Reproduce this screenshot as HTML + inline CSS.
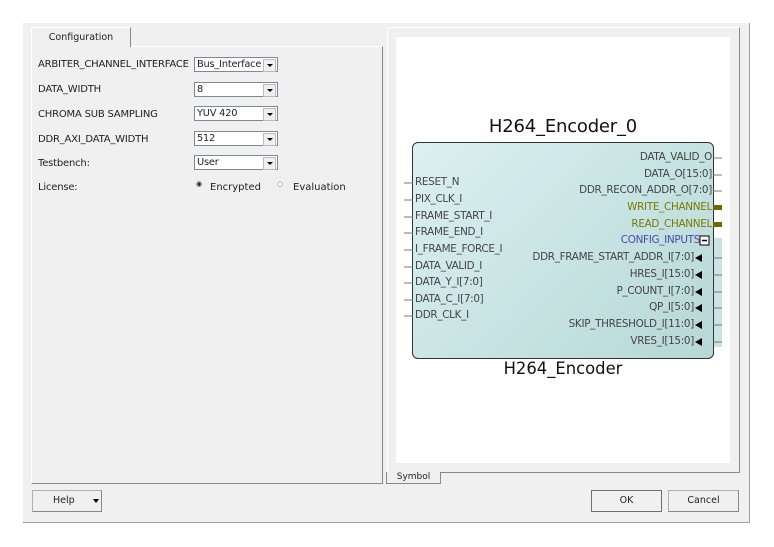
<!DOCTYPE html>
<html><head><meta charset="utf-8"><style>
*{margin:0;padding:0;box-sizing:border-box}
body{width:774px;height:547px;background:#fff;position:relative;overflow:hidden;font-family:"DejaVu Sans","Liberation Sans",sans-serif;font-size:10px;color:#222}
.a{position:absolute}
.dlg{left:23px;top:23px;width:727px;height:500px;background:#f0f0f0;border-right:1px solid #a0a0a0;border-bottom:1px solid #a0a0a0}
.lbl{position:absolute;left:38px;font-size:10px;letter-spacing:-0.2px}
.sel{position:absolute;left:194px;width:84px;height:15px;background:#fff;border:1px solid #828790;font-size:9.8px;padding-left:2px;line-height:13px;letter-spacing:-0.2px}
.sel:after{content:"";position:absolute;right:1px;top:1px;width:11px;height:11px;background:#f0f0f0;border:1px solid #bbb}
.sel i{position:absolute;right:4px;top:6px;border-left:3px solid transparent;border-right:3px solid transparent;border-top:3px solid #000;z-index:2}
.btn{position:absolute;height:22px;background:#f0f0f0;border:1px solid #b0b0b0;border-right-color:#888;border-bottom-color:#888;font-size:9.5px;text-align:center;line-height:20px}
.pl{position:absolute;font-family:"DejaVu Sans",sans-serif;font-size:10.4px;color:#444;letter-spacing:-0.3px;white-space:nowrap}
.r{text-align:right}
</style></head><body>
<div class="a dlg"></div>
<div class="a" style="left:31px;top:46px;width:352px;height:438px;border-top:1px solid #fff;border-right:1px solid #888;border-bottom:1px solid #888;border-left:1px solid #fff"></div>
<div class="a" style="left:31px;top:27px;width:100px;height:20px;background:#f0f0f0;border-left:1px solid #fff;border-top:1px solid #fff;border-right:1px solid #888;font-size:9.5px;text-align:center;line-height:20px">Configuration</div>
<div class="lbl" style="top:59px">ARBITER_CHANNEL_INTERFACE</div>
<div class="sel" style="top:57px">Bus_Interface<i></i></div>
<div class="lbl" style="top:84px">DATA_WIDTH</div>
<div class="sel" style="top:82px">8<i></i></div>
<div class="lbl" style="top:109px">CHROMA SUB SAMPLING</div>
<div class="sel" style="top:106px">YUV 420<i></i></div>
<div class="lbl" style="top:134px">DDR_AXI_DATA_WIDTH</div>
<div class="sel" style="top:131px">512<i></i></div>
<div class="lbl" style="top:158px">Testbench:</div>
<div class="sel" style="top:155px">User<i></i></div>
<div class="lbl" style="top:182px">License:</div>
<div class="a" style="left:196px;top:180px;font-size:7px">◉</div>
<div class="a" style="left:210px;top:182px;font-size:10px">Encrypted</div>
<div class="a" style="left:277px;top:180px;font-size:7px;color:#888">○</div>
<div class="a" style="left:293px;top:182px;font-size:10px">Evaluation</div>
<div class="a" style="left:387px;top:27px;width:353px;height:446px;border-left:1px solid #fff;border-top:1px solid #fff;border-right:1px solid #888;border-bottom:1px solid #888"></div>
<div class="a" style="left:396px;top:37px;width:334px;height:426px;background:#fff"></div>
<div class="a" style="left:386px;top:472px;width:55px;height:12px;border:1px solid #888;border-top:none;background:#f0f0f0;font-size:9px;text-align:center;line-height:11px">Symbol</div>
<div class="a" style="left:396px;top:116px;width:334px;text-align:center;font-family:'DejaVu Sans',sans-serif;font-size:18px;color:#111;letter-spacing:-0.2px">H264_Encoder_0</div>
<div class="a" style="left:713px;top:238px;width:9px;height:109px;background:#cbe3e3"></div>
<div class="a" style="left:412px;top:142px;width:302px;height:217px;border:1.5px solid #333;border-radius:6px;background:linear-gradient(135deg,#dcf0f2,#b6d8d6)"></div>
<div class="a" style="left:396px;top:359px;width:334px;text-align:center;font-family:'DejaVu Sans',sans-serif;font-size:16.4px;color:#111">H264_Encoder</div>
<svg class="a" style="left:0;top:0" width="774" height="547">
<g stroke="#777" stroke-width="1">
<line x1="404" y1="183" x2="413" y2="183"/><line x1="404" y1="200" x2="413" y2="200"/><line x1="404" y1="217" x2="413" y2="217"/><line x1="404" y1="233" x2="413" y2="233"/><line x1="404" y1="250" x2="413" y2="250"/><line x1="404" y1="267" x2="413" y2="267"/><line x1="404" y1="283" x2="413" y2="283"/><line x1="404" y1="300" x2="413" y2="300"/><line x1="404" y1="316" x2="413" y2="316"/>
<line x1="713" y1="158" x2="722" y2="158"/><line x1="713" y1="175" x2="722" y2="175"/><line x1="713" y1="191" x2="722" y2="191"/>
<line x1="713" y1="258" x2="722" y2="258"/><line x1="713" y1="275" x2="722" y2="275"/><line x1="713" y1="292" x2="722" y2="292"/><line x1="713" y1="308" x2="722" y2="308"/><line x1="713" y1="325" x2="722" y2="325"/><line x1="713" y1="342" x2="722" y2="342"/>
</g>
<rect x="713" y="205" width="9" height="5" fill="#6b6b00"/><rect x="713" y="222" width="9" height="5" fill="#6b6b00"/>
<rect x="700" y="236" width="9" height="9" fill="#fff" stroke="#000"/><line x1="702" y1="240.5" x2="707" y2="240.5" stroke="#000" stroke-width="1.5"/>
<g fill="#000"><path d="M695 258l7-4v8z"/><path d="M695 275l7-4v8z"/><path d="M695 292l7-4v8z"/><path d="M695 308l7-4v8z"/><path d="M695 325l7-4v8z"/><path d="M695 342l7-4v8z"/></g>
</svg>
<div class="pl" style="left:415px;top:176px">RESET_N</div>
<div class="pl" style="left:415px;top:193px">PIX_CLK_I</div>
<div class="pl" style="left:415px;top:210px">FRAME_START_I</div>
<div class="pl" style="left:415px;top:226px">FRAME_END_I</div>
<div class="pl" style="left:415px;top:243px">I_FRAME_FORCE_I</div>
<div class="pl" style="left:415px;top:260px">DATA_VALID_I</div>
<div class="pl" style="left:415px;top:276px">DATA_Y_I[7:0]</div>
<div class="pl" style="left:415px;top:293px">DATA_C_I[7:0]</div>
<div class="pl" style="left:415px;top:309px">DDR_CLK_I</div>
<div class="pl r" style="right:62px;top:151px">DATA_VALID_O</div>
<div class="pl r" style="right:62px;top:168px">DATA_O[15:0]</div>
<div class="pl r" style="right:62px;top:184px">DDR_RECON_ADDR_O[7:0]</div>
<div class="pl r" style="right:62px;top:201px;color:#7a7a00">WRITE_CHANNEL</div>
<div class="pl r" style="right:62px;top:218px;color:#7a7a00">READ_CHANNEL</div>
<div class="pl r" style="right:74px;top:234px;color:#4a4aa8">CONFIG_INPUTS</div>
<div class="pl r" style="right:80px;top:251px">DDR_FRAME_START_ADDR_I[7:0]</div>
<div class="pl r" style="right:80px;top:268px">HRES_I[15:0]</div>
<div class="pl r" style="right:80px;top:285px">P_COUNT_I[7:0]</div>
<div class="pl r" style="right:80px;top:301px">QP_I[5:0]</div>
<div class="pl r" style="right:80px;top:318px">SKIP_THRESHOLD_I[11:0]</div>
<div class="pl r" style="right:80px;top:335px">VRES_I[15:0]</div>
<div class="btn" style="left:32px;top:490px;width:70px;text-align:left;padding-left:20px">Help<span style="position:absolute;left:60px;top:8px;border-left:3px solid transparent;border-right:3px solid transparent;border-top:4px solid #000"></span></div>
<div class="btn" style="left:591px;top:490px;width:71px;border-color:#707070">OK</div>
<div class="btn" style="left:668px;top:490px;width:71px">Cancel</div>
</body></html>
